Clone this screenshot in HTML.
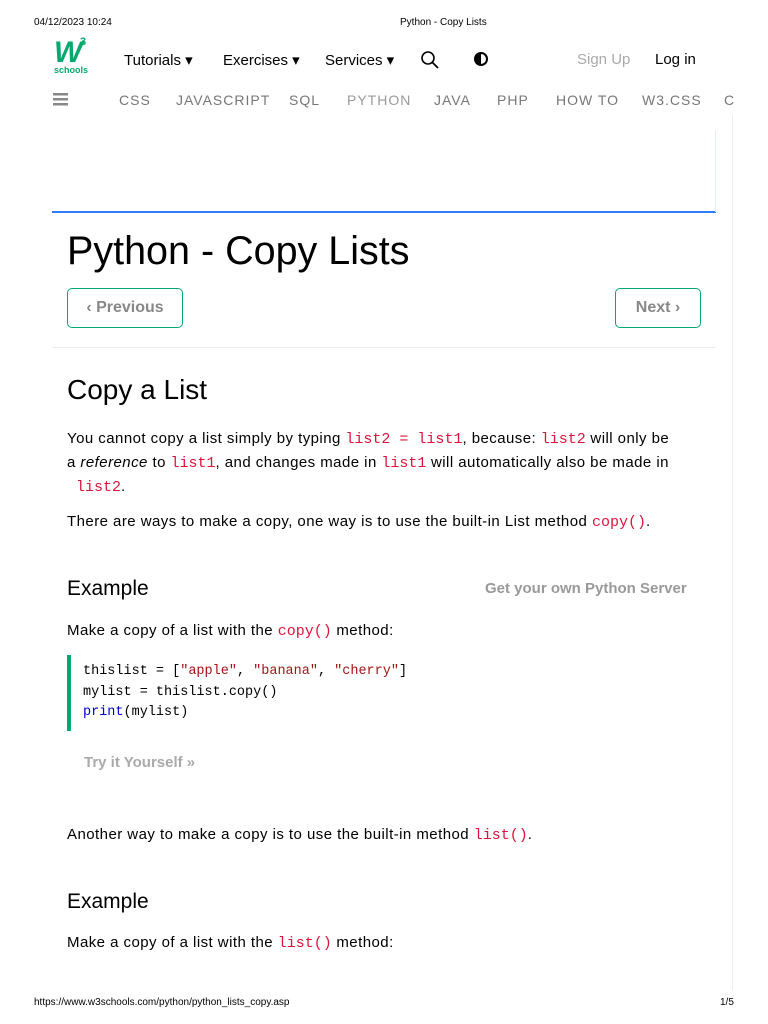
<!DOCTYPE html>
<html><head><meta charset="utf-8"><style>
body{margin:0;width:768px;height:1024px;background:#fff;position:relative;overflow:hidden;font-family:"Liberation Sans",sans-serif;color:#000}
.a{position:absolute;white-space:nowrap}
.c{font-family:"Liberation Mono",monospace;color:#dc143c;font-size:15px;letter-spacing:0}
.p{font-size:15px;line-height:23px;letter-spacing:0.45px}
.nav{font-size:14px;color:#777;letter-spacing:1px}
.btn{position:absolute;border:1.5px solid #04aa6d;border-radius:5px;color:#888;font-weight:bold;font-size:16px;text-align:center;line-height:38px;height:38px}
.code{font-family:"Liberation Mono",monospace;font-size:13.5px;line-height:20.5px}
.s{color:#a31515}
</style></head><body>
<div class="a" style="left:34px;top:17px;font-size:10px">04/12/2023 10:24</div>
<div class="a" style="left:400px;top:17px;font-size:10px">Python - Copy Lists</div>
<div class="a" style="left:54px;top:38px;color:#04aa6d;font-weight:900;font-size:30px;line-height:30px;font-style:italic">W</div>
<div class="a" style="left:80px;top:36px;color:#04aa6d;font-weight:bold;font-size:11px">3</div>
<div class="a" style="left:54px;top:65px;color:#04aa6d;font-weight:bold;font-size:9px">schools</div>
<div class="a" style="left:124px;top:51px;font-size:15px">Tutorials ▾</div>
<div class="a" style="left:223px;top:51px;font-size:15px">Exercises ▾</div>
<div class="a" style="left:325px;top:51px;font-size:15px">Services ▾</div>
<svg class="a" style="left:420px;top:50px" width="20" height="20"><circle cx="8" cy="8" r="6" fill="none" stroke="#000" stroke-width="1.6"/><line x1="12.5" y1="12.5" x2="18" y2="18" stroke="#000" stroke-width="1.8"/></svg>
<svg class="a" style="left:473px;top:51px" width="16" height="16"><circle cx="8" cy="8" r="6" fill="none" stroke="#000" stroke-width="2"/><path d="M8 2A6 6 0 0 0 8 14Z" fill="#000"/></svg>
<div class="a" style="left:577px;top:51px;font-size:15px;color:#aaa">Sign Up</div>
<div class="a" style="left:655px;top:51px;font-size:15px">Log in</div>
<svg class="a" style="left:53px;top:93px" width="15" height="13"><rect x="0" y="0" width="15" height="2.5" fill="#888"/><rect x="0" y="5" width="15" height="2.5" fill="#888"/><rect x="0" y="10" width="15" height="2.5" fill="#888"/></svg>
<div class="a nav" style="left:119px;top:92px">CSS</div>
<div class="a nav" style="left:176px;top:92px">JAVASCRIPT</div>
<div class="a nav" style="left:289px;top:92px">SQL</div>
<div class="a nav" style="left:347px;top:92px;color:#999">PYTHON</div>
<div class="a nav" style="left:434px;top:92px">JAVA</div>
<div class="a nav" style="left:497px;top:92px">PHP</div>
<div class="a nav" style="left:556px;top:92px">HOW TO</div>
<div class="a nav" style="left:642px;top:92px">W3.CSS</div>
<div class="a nav" style="left:724px;top:92px">C</div>
<div class="a" style="left:732px;top:115px;width:1px;height:875px;background:#eee"></div>
<div class="a" style="left:52px;top:211px;width:664px;height:1.5px;background:#2f7cf6"></div>
<div class="a" style="left:715px;top:130px;width:1px;height:82px;background:#e4ecfa"></div>
<div class="a" style="left:67px;top:229px;font-size:39.5px">Python - Copy Lists</div>
<div class="btn" style="left:67px;top:288px;width:114px">‹ Previous</div>
<div class="btn" style="left:615px;top:288px;width:84px">Next ›</div>
<div class="a" style="left:52px;top:347px;width:664px;height:1px;background:#eee"></div>
<div class="a" style="left:67px;top:374px;font-size:28px">Copy a List</div>
<div class="a p" style="left:67px;top:427px">You cannot copy a list simply by typing <span class="c">list2 = list1</span>, because: <span class="c">list2</span> will only be<br>a <i>reference</i> to <span class="c">list1</span>, and changes made in <span class="c">list1</span> will automatically also be made in<br><span class="c">&nbsp;list2</span>.</div>
<div class="a p" style="left:67px;top:510px">There are ways to make a copy, one way is to use the built-in List method <span class="c">copy()</span>.</div>
<div class="a" style="left:67px;top:577px;font-size:21px">Example</div>
<div class="a" style="left:485px;top:580px;font-size:15px;color:#999;font-weight:bold">Get your own Python Server</div>
<div class="a p" style="left:67px;top:619px">Make a copy of a list with the <span class="c">copy()</span> method:</div>
<div class="a" style="left:67px;top:655px;width:4px;height:76px;background:#04aa6d"></div>
<div class="a code" style="left:83px;top:662px">thislist = [<span class="s">"apple"</span>, <span class="s">"banana"</span>, <span class="s">"cherry"</span>]<br>mylist = thislist.copy()<br><span style="color:#0000cd">print</span>(mylist)</div>
<div class="a" style="left:84px;top:754px;font-size:15px;color:#aaa;font-weight:bold">Try it Yourself »</div>
<div class="a p" style="left:67px;top:823px">Another way to make a copy is to use the built-in method <span class="c">list()</span>.</div>
<div class="a" style="left:67px;top:890px;font-size:21px">Example</div>
<div class="a p" style="left:67px;top:931px">Make a copy of a list with the <span class="c">list()</span> method:</div>
<div class="a" style="left:34px;top:997px;font-size:10px">https://www.w3schools.com/python/python_lists_copy.asp</div>
<div class="a" style="left:720px;top:997px;font-size:10px">1/5</div>
</body></html>
